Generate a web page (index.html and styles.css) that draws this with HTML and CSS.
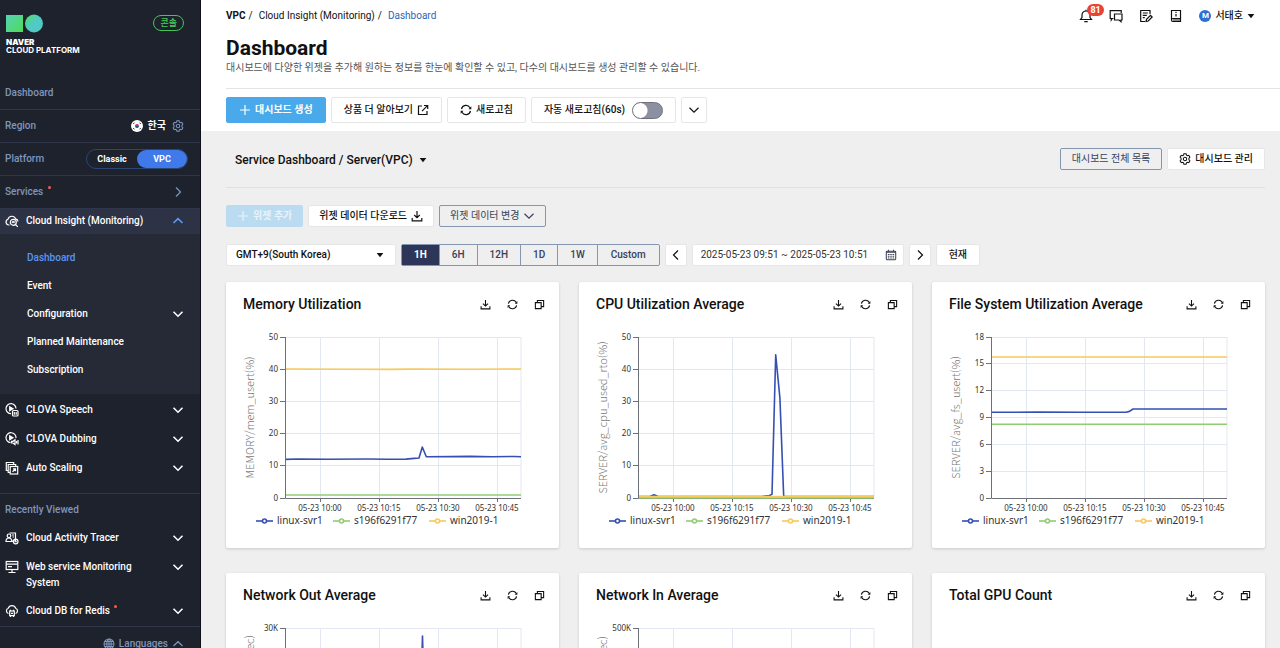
FILE: index.html
```html
<!DOCTYPE html>
<html lang="ko">
<head>
<meta charset="utf-8">
<title>Dashboard</title>
<link rel="stylesheet" href="styles.css">
</head>
<body>
<svg class="sprite" aria-hidden="true">
  <symbol id="down" viewBox="0 0 12 12"><path d="M1.5 3.8 6 8.2l4.500-4.400"/></symbol>
  <symbol id="up" viewBox="0 0 12 12"><path d="M1.500 8 6 3.700 10.500 8"/></symbol>
  <symbol id="right" viewBox="0 0 12 12"><path d="m4 1.500 4.500 4.500L4 10.500"/></symbol>
  <symbol id="left" viewBox="0 0 12 12"><path d="M8 1.500 3.500 6 8 10.500"/></symbol>
  <symbol id="plus" viewBox="0 0 12 12"><path d="M6 1v10M1 6h10"/></symbol>
  <symbol id="caret" viewBox="0 0 12 12"><path d="M1 3h10L6 9.500z" fill="currentColor" stroke="none"/></symbol>
  <symbol id="external" viewBox="0 0 12 12"><path d="M5 2H1.500v8.500H10V7M7 1.500h3.700V5M10.500 1.700 5 7.200"/></symbol>
  <symbol id="refresh" viewBox="0 0 12 12"><path d="M1.500 5A4.600 4.600 0 0 1 10 3.700M10.500 7A4.600 4.600 0 0 1 2 8.300"/><path d="M11.300 2.300v3H8.500zM.7 9.700v-3h2.800z" fill="currentColor" stroke="none"/></symbol>
  <symbol id="download" viewBox="0 0 12 12"><path d="M6 1v6.500M3.200 5 6 7.700 8.800 5M1.200 8v2.800h9.600V8"/></symbol>
  <symbol id="copy" viewBox="0 0 12 12"><path d="M1.500 4h6.300v6.500H1.500zM3.700 4V1.700h6.800v6.600H7.800"/></symbol>
  <symbol id="gear" viewBox="0 0 14 14"><path d="m5.700 1-.4 1.500-1.200.7-1.500-.5L1.300 5l1.100 1.100v1.800L1.300 9l1.300 2.300 1.500-.5 1.200.7.4 1.500h2.600l.4-1.500 1.200-.7 1.500.5L12.700 9l-1.100-1.100V6.100L12.700 5l-1.300-2.300-1.500.5-1.200-.7L8.300 1z"/><circle cx="7" cy="7" r="2"/></symbol>
  <symbol id="insight" viewBox="0 0 14 14"><path d="M4.500 11H3.800A3 3 0 0 1 3 5.200a4 4 0 0 1 7.600-.4A3 3 0 0 1 13 7.500"/><circle cx="8.300" cy="8.300" r="3"/><path d="m10.500 10.500 2.300 2.300M7 8.800l1-1.300 1 1 .8-1"/></symbol>
  <symbol id="speech" viewBox="0 0 14 14"><path d="M6 10.700A5 5 0 1 1 11 5.500"/><path d="M4.700 3.700v4l3.300-2z" fill="currentColor"/><rect x="7.500" y="7.500" width="5.500" height="5.500" rx="1"/><path d="M9.300 9v2.700M11.200 9v2.700"/></symbol>
  <symbol id="dubbing" viewBox="0 0 14 14"><path d="M5.500 10.700A5 5 0 1 1 11 6"/><path d="M4.700 3.700v4l3.300-2z" fill="currentColor"/><path d="M6.500 9.300H8l2-1.500v4.700l-2-1.500H6.500zM11.500 9v2.500M13 8v4.500"/></symbol>
  <symbol id="scaling" viewBox="0 0 14 14"><path d="M3 9.500H1.300v-8h7.400V3"/><path d="M5 11.500H3.200V3.500h7.500V5"/><rect x="5.200" y="5.500" width="7.500" height="7.500"/><path d="M7.500 10.700 10.400 8M8 7.800h2.500v2.500"/></symbol>
  <symbol id="tracer" viewBox="0 0 14 14"><path d="M4.500 2h6v8h-3M1 10.500C1 8 2.500 7 4 7s2.700 1 3 3.500z"/><circle cx="4" cy="4.800" r="1.800"/><path d="M7 4h2M7.500 6h1.500"/><circle cx="10.700" cy="10.500" r="2.300"/><path d="M10.700 9.300v1.400h1"/></symbol>
  <symbol id="monitor" viewBox="0 0 14 14"><rect x="1.200" y="1.500" width="11.600" height="8"/><path d="M1.200 4.200h11.600M7 9.500v3M3.500 12.500h7M3 6.700h4"/></symbol>
  <symbol id="redis" viewBox="0 0 14 14"><path d="M3.500 9.500a2.800 2.800 0 0 1-.3-5.300 4 4 0 0 1 7.500 0 2.800 2.800 0 0 1-.2 5.300"/><rect x="4.700" y="7" width="4.600" height="4.600"/><path d="M6 9.300h2M5.500 11.600V13M8.500 11.600V13M5.500 5.700V7M8.500 5.700V7"/></symbol>
  <symbol id="globe" viewBox="0 0 14 14"><circle cx="7" cy="7" r="5.800"/><ellipse cx="7" cy="7" rx="2.600" ry="5.800"/><path d="M1.200 7h11.600M2 4h10M2 10h10M7 1.200v11.600"/></symbol>
  <symbol id="bell" viewBox="0 0 14 14"><path d="M1.500 10.500h11L11 8.500V6a4 4 0 0 0-8 0v2.500zM5.300 12.700h3.400M7 2V.8"/></symbol>
  <symbol id="chat" viewBox="0 0 14 14"><path d="M4.500 9.500H3.300L2.300 11V9.500H1.200V1.700h11V4"/><path d="M5.500 5h7.500v6h-1v1.700L10 11H5.500z"/></symbol>
  <symbol id="note" viewBox="0 0 14 14"><path d="M11 5V1.500H1.700v11H6M3.800 4h5M3.800 6.300h4M3.800 8.600h2M7 12.500l.5-2.200 4-4 1.700 1.700-4 4z"/></symbol>
  <symbol id="book" viewBox="0 0 14 14"><path d="M2.500 11V1.500h9v8H4a1.500 1.500 0 0 0 0 3h7.500v-3M7 2.800V4M7 5v2.500M4 11h7.500"/></symbol>
  <symbol id="calendar" viewBox="0 0 14 14"><rect x="1.500" y="2.500" width="11" height="10" rx="1"/><path d="M1.500 3.800h11M4 1v2M10 1v2"/><path d="M3.300 6.500h7.600M3.300 8.500h7.600M3.300 10.500h7.600" stroke-dasharray="1.400 .6"/></symbol>
  <symbol id="grid" viewBox="0 0 333 226">
    <path class="gridline" d="M94.500 15v161M153.500 15v161M212.500 15v161M271.500 15v161M295 15v161"/>
    <path class="axis" d="M59.500 15v161.500H295M94.500 176v4M153.500 176v4M212.500 176v4M271.500 176v4"/>
  </symbol>
  <symbol id="rows5" viewBox="0 0 333 226">
    <path class="gridline" d="M60 15.500h235M60 47.500h235M60 79.500h235M60 111.500h235M60 143.500h235"/>
    <path class="axis" d="M54 15.500h5M54 47.500h5M54 79.500h5M54 111.500h5M54 143.500h5M54 176.500h5"/>
  </symbol>
  <symbol id="rows6" viewBox="0 0 333 226">
    <path class="gridline" d="M60 15.500h235M60 41.500h235M60 68.500h235M60 95.500h235M60 122.500h235M60 149.500h235"/>
    <path class="axis" d="M54 15.500h5M54 41.500h5M54 68.500h5M54 95.500h5M54 122.500h5M54 149.500h5M54 176.500h5"/>
  </symbol>
  <symbol id="markers" viewBox="0 0 333 226">
    <path class="blue" d="M30 199h17"/><circle class="blue dot" cx="38.500" cy="199" r="2"/>
    <path class="green" d="M107 199h17"/><circle class="green dot" cx="115.500" cy="199" r="2"/>
    <path class="yellow" d="M203 199h17"/><circle class="yellow dot" cx="211.500" cy="199" r="2"/>
  </symbol>
</svg>

<div class="app">
  <aside class="sidebar">
    <div class="brand">
      <div>
        <svg class="logo" viewBox="0 0 38 18" role="img" aria-label="Naver Cloud">
          <defs>
            <linearGradient id="sq" x1="0" y1="0" x2="1" y2="1"><stop offset="0" stop-color="#56d3b4"/><stop offset="1" stop-color="#4fda58"/></linearGradient>
            <linearGradient id="ci" x1="0" y1="0" x2="1" y2="1"><stop offset=".2" stop-color="#50d886"/><stop offset=".5" stop-color="#51c9c9"/><stop offset="1" stop-color="#53cbb8"/></linearGradient>
          </defs>
          <rect y="0" width="17" height="17" fill="url(#sq)"/><circle cx="28" cy="8.500" r="9" fill="url(#ci)"/>
        </svg>
        <div class="wordmark"><b>NAVER</b><span>CLOUD PLATFORM</span></div>
      </div>
      <span class="badge">콘솔</span>
    </div>
    <a class="row muted first" href="#">Dashboard</a>
    <div class="row muted"><span>Region</span>
      <span class="country"><svg class="flag" viewBox="0 0 12 12"><circle cx="6" cy="6" r="6" fill="#fff"/><path d="M4 6a2 2 0 0 1 4 0z" fill="#d8343f"/><path d="M4 6a2 2 0 0 0 4 0z" fill="#274a9c"/><path d="m2.300 4 1-1.300M8.700 2.700l1 1.300M2.300 8l1 1.300M8.700 9.300l1-1.300" stroke="#333"/></svg>
      <b>한국</b><button class="plain" aria-label="Region settings"><svg class="ic"><use href="#gear"/></svg></button></span>
    </div>
    <div class="row muted"><span>Platform</span>
      <span class="switch"><button>Classic</button><button class="on">VPC</button></span>
    </div>
    <a class="row muted services" href="#"><span>Services <i class="new"></i></span><svg class="ic chev"><use href="#right"/></svg></a>
    <a class="item active" href="#"><svg class="ic lead"><use href="#insight"/></svg><span>Cloud Insight (Monitoring)</span><svg class="ic chev"><use href="#up"/></svg></a>
    <nav class="submenu">
      <a class="current" href="#">Dashboard</a>
      <a href="#">Event</a>
      <a href="#">Configuration<svg class="ic chev"><use href="#down"/></svg></a>
      <a href="#">Planned Maintenance</a>
      <a href="#">Subscription</a>
    </nav>
    <nav class="group">
      <a class="item" href="#"><svg class="ic lead"><use href="#speech"/></svg><span>CLOVA Speech</span><svg class="ic chev"><use href="#down"/></svg></a>
      <a class="item" href="#"><svg class="ic lead"><use href="#dubbing"/></svg><span>CLOVA Dubbing</span><svg class="ic chev"><use href="#down"/></svg></a>
      <a class="item" href="#"><svg class="ic lead"><use href="#scaling"/></svg><span>Auto Scaling</span><svg class="ic chev"><use href="#down"/></svg></a>
    </nav>
    <nav class="group recent">
      <h2>Recently Viewed</h2>
      <a class="item" href="#"><svg class="ic lead"><use href="#tracer"/></svg><span>Cloud Activity Tracer</span><svg class="ic chev"><use href="#down"/></svg></a>
      <a class="item tall" href="#"><svg class="ic lead"><use href="#monitor"/></svg><span>Web service Monitoring System</span><svg class="ic chev"><use href="#down"/></svg></a>
      <a class="item" href="#"><svg class="ic lead"><use href="#redis"/></svg><span>Cloud DB for Redis <i class="new"></i></span><svg class="ic chev"><use href="#down"/></svg></a>
    </nav>
    <button class="languages"><svg class="ic"><use href="#globe"/></svg>Languages<svg class="ic chev"><use href="#up"/></svg></button>
  </aside>

  <main class="main">
    <header class="header">
      <div class="topbar">
        <nav class="crumbs"><b>VPC</b> <span>/</span> <a href="#">Cloud Insight (Monitoring)</a> <span>/</span> <a class="here" href="#">Dashboard</a></nav>
        <div class="tools">
          <button class="plain bell" aria-label="Notifications"><svg class="ic"><use href="#bell"/></svg><span class="count">81</span></button>
          <button class="plain" aria-label="Chat"><svg class="ic"><use href="#chat"/></svg></button>
          <button class="plain" aria-label="Notes"><svg class="ic"><use href="#note"/></svg></button>
          <button class="plain" aria-label="Guide"><svg class="ic"><use href="#book"/></svg></button>
          <button class="plain user"><span class="avatar">M</span>서태호<svg class="ic small"><use href="#caret"/></svg></button>
        </div>
      </div>
      <h1>Dashboard</h1>
      <p>대시보드에 다양한 위젯을 추가해 원하는 정보를 한눈에 확인할 수 있고, 다수의 대시보드를 생성 관리할 수 있습니다.</p>
      <div class="actions">
        <button class="btn primary"><svg class="ic"><use href="#plus"/></svg>대시보드 생성</button>
        <button class="btn">상품 더 알아보기<svg class="ic"><use href="#external"/></svg></button>
        <button class="btn"><svg class="ic"><use href="#refresh"/></svg>새로고침</button>
        <label class="btn auto">자동 새로고침(60s)<input type="checkbox" class="toggle"></label>
        <button class="btn icon" aria-label="More"><svg class="ic"><use href="#down"/></svg></button>
      </div>
    </header>

    <section class="content">
      <div class="board">
        <button class="plain boardname">Service Dashboard / Server(VPC)<svg class="ic small"><use href="#caret"/></svg></button>
        <div class="line">
          <button class="btn outline">대시보드 전체 목록</button>
          <button class="btn"><svg class="ic"><use href="#gear"/></svg>대시보드 관리</button>
        </div>
      </div>
      <div class="line widgets">
        <button class="btn primary" disabled><svg class="ic"><use href="#plus"/></svg>위젯 추가</button>
        <button class="btn">위젯 데이터 다운로드<svg class="ic"><use href="#download"/></svg></button>
        <button class="btn outline">위젯 데이터 변경<svg class="ic"><use href="#down"/></svg></button>
      </div>
      <div class="line period">
        <span class="zone"><select aria-label="Time zone"><option>GMT+9(South Korea)</option></select><svg class="ic small"><use href="#caret"/></svg></span>
        <div class="ranges"><button class="on">1H</button><button>6H</button><button>12H</button><button>1D</button><button>1W</button><button>Custom</button></div>
        <button class="btn arrow" aria-label="Previous"><svg class="ic"><use href="#left"/></svg></button>
        <label class="date"><input type="text" aria-label="Period" value="2025-05-23 09:51 ~ 2025-05-23 10:51"><svg class="ic"><use href="#calendar"/></svg></label>
        <button class="btn arrow" aria-label="Next"><svg class="ic"><use href="#right"/></svg></button>
        <button class="btn now">현재</button>
      </div>

      <div class="cards">
        <article class="card">
          <div class="cardhead"><h3>Memory Utilization</h3><button class="plain" aria-label="Download"><svg class="ic"><use href="#download"/></svg></button><button class="plain" aria-label="Refresh"><svg class="ic"><use href="#refresh"/></svg></button><button class="plain" aria-label="Copy"><svg class="ic"><use href="#copy"/></svg></button></div>
          <svg class="chart" viewBox="0 0 333 226">
            <use href="#rows5"/><use href="#grid"/><use href="#markers"/>
            <g class="values"><text x="52" y="18">50</text><text x="52" y="50">40</text><text x="52" y="82">30</text><text x="52" y="114">20</text><text x="52" y="146">10</text><text x="52" y="179">0</text></g>
            <g class="times"><text x="94" y="189">05-23 10:00</text><text x="153" y="189">05-23 10:15</text><text x="212" y="189">05-23 10:30</text><text x="271" y="189">05-23 10:45</text></g>
            <g class="keys"><text x="51" y="202">linux-svr1</text><text x="128" y="202">s196f6291f77</text><text x="224" y="202">win2019-1</text></g>
            <text class="unit" transform="translate(28 95.500) rotate(-90)">MEMORY/mem_usert(%)</text>
            <path class="green" d="M60 173h235"/>
            <path class="blue" d="M60 137.400 72 137l30 .2 40-.2 20 .3 18-.2 8-.7 5-.4 3.300-11 4 9.800 24-.2 20-.2 22 .3 22-.2 6.700 .2"/>
            <path class="yellow" d="m60 47 75 .2 28 .2 22-.3 60 .1 50-.2"/>
          </svg>
        </article>
        <article class="card">
          <div class="cardhead"><h3>CPU Utilization Average</h3><button class="plain" aria-label="Download"><svg class="ic"><use href="#download"/></svg></button><button class="plain" aria-label="Refresh"><svg class="ic"><use href="#refresh"/></svg></button><button class="plain" aria-label="Copy"><svg class="ic"><use href="#copy"/></svg></button></div>
          <svg class="chart" viewBox="0 0 333 226">
            <use href="#rows5"/><use href="#grid"/><use href="#markers"/>
            <g class="values"><text x="52" y="18">50</text><text x="52" y="50">40</text><text x="52" y="82">30</text><text x="52" y="114">20</text><text x="52" y="146">10</text><text x="52" y="179">0</text></g>
            <g class="times"><text x="94" y="189">05-23 10:00</text><text x="153" y="189">05-23 10:15</text><text x="212" y="189">05-23 10:30</text><text x="271" y="189">05-23 10:45</text></g>
            <g class="keys"><text x="51" y="202">linux-svr1</text><text x="128" y="202">s196f6291f77</text><text x="224" y="202">win2019-1</text></g>
            <text class="unit" transform="translate(28 95.500) rotate(-90)">SERVER/avg_cpu_used_rto(%)</text>
            <path class="blue" d="m60 174.500 11 0 4-1.700 4 1.700 54 0 50 0 5-.8 1 .6 4-2 3.700-139.500 4.200 43 3.800 98.700 90.300 0"/>
            <path class="green" d="M60 176h235"/>
            <path class="yellow" d="M60 174.500h235"/>
          </svg>
        </article>
        <article class="card">
          <div class="cardhead"><h3>File System Utilization Average</h3><button class="plain" aria-label="Download"><svg class="ic"><use href="#download"/></svg></button><button class="plain" aria-label="Refresh"><svg class="ic"><use href="#refresh"/></svg></button><button class="plain" aria-label="Copy"><svg class="ic"><use href="#copy"/></svg></button></div>
          <svg class="chart" viewBox="0 0 333 226">
            <use href="#rows6"/><use href="#grid"/><use href="#markers"/>
            <g class="values"><text x="52" y="18">18</text><text x="52" y="44">15</text><text x="52" y="71">12</text><text x="52" y="98">9</text><text x="52" y="125">6</text><text x="52" y="152">3</text><text x="52" y="179">0</text></g>
            <g class="times"><text x="94" y="189">05-23 10:00</text><text x="153" y="189">05-23 10:15</text><text x="212" y="189">05-23 10:30</text><text x="271" y="189">05-23 10:45</text></g>
            <g class="keys"><text x="51" y="202">linux-svr1</text><text x="128" y="202">s196f6291f77</text><text x="224" y="202">win2019-1</text></g>
            <text class="unit" transform="translate(28 95.500) rotate(-90)">SERVER/avg_fs_usert(%)</text>
            <path class="green" d="M60 102.300h235"/>
            <path class="blue" d="m60 90.300 45-.2 45 .1 44 0 3.500-.8 3.500-2.400h94"/>
            <path class="yellow" d="M60 35h235"/>
          </svg>
        </article>
        <article class="card">
          <div class="cardhead"><h3>Network Out Average</h3><button class="plain" aria-label="Download"><svg class="ic"><use href="#download"/></svg></button><button class="plain" aria-label="Refresh"><svg class="ic"><use href="#refresh"/></svg></button><button class="plain" aria-label="Copy"><svg class="ic"><use href="#copy"/></svg></button></div>
          <svg class="chart" viewBox="0 0 333 226">
            <use href="#rows6"/><use href="#grid"/><use href="#markers"/>
            <g class="values"><text x="52" y="18">30K</text></g>
            <text class="unit end" transform="translate(28 22) rotate(-90)">(bytes/sec)</text>
            <path class="blue" d="M60 174h132l4.500-151 4 151h94"/>
          </svg>
        </article>
        <article class="card">
          <div class="cardhead"><h3>Network In Average</h3><button class="plain" aria-label="Download"><svg class="ic"><use href="#download"/></svg></button><button class="plain" aria-label="Refresh"><svg class="ic"><use href="#refresh"/></svg></button><button class="plain" aria-label="Copy"><svg class="ic"><use href="#copy"/></svg></button></div>
          <svg class="chart" viewBox="0 0 333 226">
            <use href="#rows5"/><use href="#grid"/><use href="#markers"/>
            <g class="values"><text x="52" y="18">500K</text></g>
            <text class="unit end" transform="translate(28 23) rotate(-90)">(bytes/sec)</text>
          </svg>
        </article>
        <article class="card">
          <div class="cardhead"><h3>Total GPU Count</h3><button class="plain" aria-label="Download"><svg class="ic"><use href="#download"/></svg></button><button class="plain" aria-label="Refresh"><svg class="ic"><use href="#refresh"/></svg></button><button class="plain" aria-label="Copy"><svg class="ic"><use href="#copy"/></svg></button></div>
        </article>
      </div>
    </section>
  </main>
</div>
</body>
</html>
```
FILE: styles.css
```css
* { box-sizing: border-box; }
body, h1, h2, h3, p { margin: 0; }
body { font: 10px/16px Roboto, "Noto Sans CJK KR", sans-serif; color: #111; background: #efefef; }
a { color: inherit; text-decoration: none; }
button, input, select { font: inherit; color: inherit; }
.sprite { position: absolute; width: 0; height: 0; }
.ic { width: 12px; height: 12px; flex: none; fill: none; stroke: currentColor; stroke-width: 1.2; display: block; }
.ic.small { width: 8px; height: 8px; }
.plain { border: 0; background: none; padding: 0; display: flex; align-items: center; }

.app { display: flex; height: 100vh; overflow: hidden; }

/* Sidebar */
.sidebar { width: 201px; flex: none; overflow: hidden; background: #1e222d; border-right: 1px solid #0e111a; color: #fff; font-weight: 500; }
.brand { display: flex; justify-content: space-between; align-items: flex-start; padding: 15px 16px 0 6px; height: 76px; }
.logo { display: block; width: 38px; height: 18px; overflow: visible; }
.wordmark { font: 700 8px/8px Inter, sans-serif; margin-top: 5px; display: flex; flex-direction: column; }
.badge { border: 1px solid #45c25a; border-radius: 8px; color: #45d05c; font-size: 9px; line-height: 14px; padding: 0 6px; }
.row { display: flex; justify-content: space-between; align-items: center; height: 33px; padding: 0 12px 0 5px; border-bottom: 1px solid #2f354a; }
.row.first { height: 34px; }
.muted { color: #7e96bd; }
.country { display: flex; align-items: center; gap: 5px; padding-right: 4px; }
.country b { color: #fff; margin-right: 1px; }
.flag { width: 12px; height: 12px; }
.switch { display: flex; border: 1px solid #2c4673; border-radius: 10px; color: #fff; height: 20px; width: 102px; }
.switch button { flex: 1; border: 0; border-radius: 9px; background: none; padding: 0; font-size: 9px; font-weight: 700; }
.switch .on { background: #4079ea; }
.row.services { padding-right: 16px; border-bottom: 0; height: 32px; }
.new { display: inline-block; width: 3px; height: 3px; border-radius: 50%; background: #fa5b47; vertical-align: 6px; margin-left: 2px; }
.chev { margin-left: auto; }
.item { display: flex; gap: 7px; padding: 6px 16px 7px 5px; }
.item .ic { margin-top: 2px; }
.lead { width: 14px; height: 14px; }
.item .lead { margin-top: 1px; }
.item span { max-width: 128px; }
.item .chev { stroke-width: 1.6; }
.item.active { background: #2d3244; padding: 4px 16px 5px 5px; border-top: 1px solid #2f354a; }
.active .chev { color: #5b9bf8; }
.submenu { background: #262a36; padding: 10px 16px 10px 27px; }
.submenu a { display: flex; align-items: center; height: 28px; }
.submenu .chev { stroke-width: 1.6; }
.current { color: #5b95f5; }
.group { padding: 2px 0 10px; }
.recent { border-top: 1px solid #2f354a; padding: 8px 0 0; }
.recent h2 { font-size: 10px; line-height: 16px; font-weight: 500; color: #7e96bd; padding: 0 5px; margin-bottom: 6px; }
.recent .tall { padding-bottom: 6px; }
.languages { display: flex; align-items: center; justify-content: flex-end; gap: 4px; width: 100%; border: 0; border-top: 1px solid #2f354a; background: none; color: #7e96bd; padding: 9px 16px; font-weight: 500; }
.languages .chev { margin-left: 0; }

/* Header */
.main { flex: 1; min-width: 0; }
.header { background: #fff; padding: 8px 0 8px 25px; }
.topbar { display: flex; justify-content: space-between; align-items: center; height: 16px; padding-right: 25px; }
.crumbs { display: flex; gap: 3px; }
.crumbs b { font-weight: 700; }
.crumbs span { margin-right: 3px; }
.here { color: #2d64b8; }
.tools { display: flex; align-items: center; gap: 16px; font-weight: 500; }
.tools .ic { width: 14px; height: 14px; }
.bell { position: relative; }
.count { position: absolute; left: 8px; top: -5px; background: #ea4335; color: #fff; font: 700 9px/12px Roboto, sans-serif; border-radius: 6px; padding: 0 3px; }
.user { gap: 4px; font-weight: 500; }
.tools .small { width: 8px; height: 8px; }
.avatar { width: 12px; height: 12px; border-radius: 50%; background: #2e6fd0; color: #fff; font-size: 8px; line-height: 12px; font-weight: 700; }
.header h1 { font-size: 21px; line-height: 24px; font-weight: 700; margin-top: 12px; }
.header p { line-height: 14px; color: #555; margin-top: 1px; padding-bottom: 13px; border-bottom: 1px solid #e4e4e4; }
.actions, .line { display: flex; gap: 5px; }
.actions { padding-top: 8px; }
.btn { display: inline-flex; align-items: center; justify-content: center; gap: 4px; height: 22px; padding: 0 11px; border: 1px solid #e6e6e6; border-radius: 2px; background: #fff; font-weight: 500; white-space: nowrap; }
.widgets .btn { padding: 0 10px; }
.actions .btn { height: 26px; padding: 0 12px; }
.actions .auto { gap: 7px; }
.actions .icon { padding: 0 6px; }
.btn.primary { background: #4aa9ea; border-color: #4aa9ea; color: #fff; font-weight: 700; }
.btn.primary:disabled { background: #bbdcf0; border-color: #bbdcf0; color: #e6f3fb; }
.btn.outline { background: #efefef; border-color: #8496b0; color: #36425a; font-weight: 400; }
.toggle { appearance: none; margin: 0; width: 31px; height: 17px; border-radius: 9px; border: 1px solid #6d707c; background: radial-gradient(circle at 7px 50%, #fff 7px, #8d90a0 8px); }

/* Content */
.content { padding: 17px 15px 0 25px; }
.board { display: flex; justify-content: space-between; padding-bottom: 17px; border-bottom: 1px solid #e0e0e0; }
.boardname { font-size: 12px; font-weight: 500; gap: 6px; padding: 2px 0 0 9px; }
.widgets { padding-top: 17px; }
.period { padding: 17px 0 16px; }
.zone { display: flex; align-items: center; width: 170px; height: 22px; background: #fff; border: 1px solid #e6e6e6; border-radius: 2px; padding-right: 11px; }
.zone select { appearance: none; flex: 1; border: 0; background: none; padding: 0 9px; font-weight: 500; }
.ranges { display: flex; border: 1px solid #8496b0; border-radius: 2px; }
.ranges button { border: 0; border-right: 1px solid #8496b0; background: none; padding: 0 12px; font-weight: 500; color: #36425a; }
.ranges button:last-child { border-right: 0; padding: 0 13px; }
.ranges .on { background: #2d3559; color: #fff; font-weight: 700; }
.arrow { padding: 0 4px; }
.now { padding: 0 12px; }
.date { display: flex; align-items: center; height: 22px; width: 212px; background: #fff; border: 1px solid #e6e6e6; border-radius: 2px; padding: 0 6px 0 8px; }
.date input { flex: 1; min-width: 0; border: 0; padding: 0; background: none; color: #333; }
.date .ic { color: #3a4050; }
.cards { display: grid; grid-template-columns: repeat(3, 1fr); gap: 25px 20px; }
.card { background: #fff; border-radius: 2px; box-shadow: 0 1px 3px rgb(0 0 0 / 16%); }
.cardhead { display: flex; align-items: center; gap: 16px; height: 40px; padding: 4px 14px 0 17px; }
.cardhead h3 { flex: 1; font-size: 14px; line-height: 18px; font-weight: 500; }
.cardhead .ic { width: 11px; height: 11px; }
.chart { display: block; width: 100%; font-family: "Noto Sans", "Open Sans", sans-serif; fill: none; }
.gridline { stroke: #e3e7f3; }
.axis { stroke: #6e7079; }
.times, .values { font-size: 8px; fill: #333; }
.times { text-anchor: middle; }
.values { text-anchor: end; }
.keys { font-size: 10px; fill: #333; }
.unit { font: 300 11px "Noto Sans CJK KR", sans-serif; fill: #777; text-anchor: middle; }
.unit.end { text-anchor: end; }
.blue, .green, .yellow { stroke-width: 1.6; stroke-linejoin: round; }
.blue { stroke: #3550b0; }
.green { stroke: #91cc75; }
.yellow { stroke: #f6ca5b; }
.dot { fill: #fff; }
```
